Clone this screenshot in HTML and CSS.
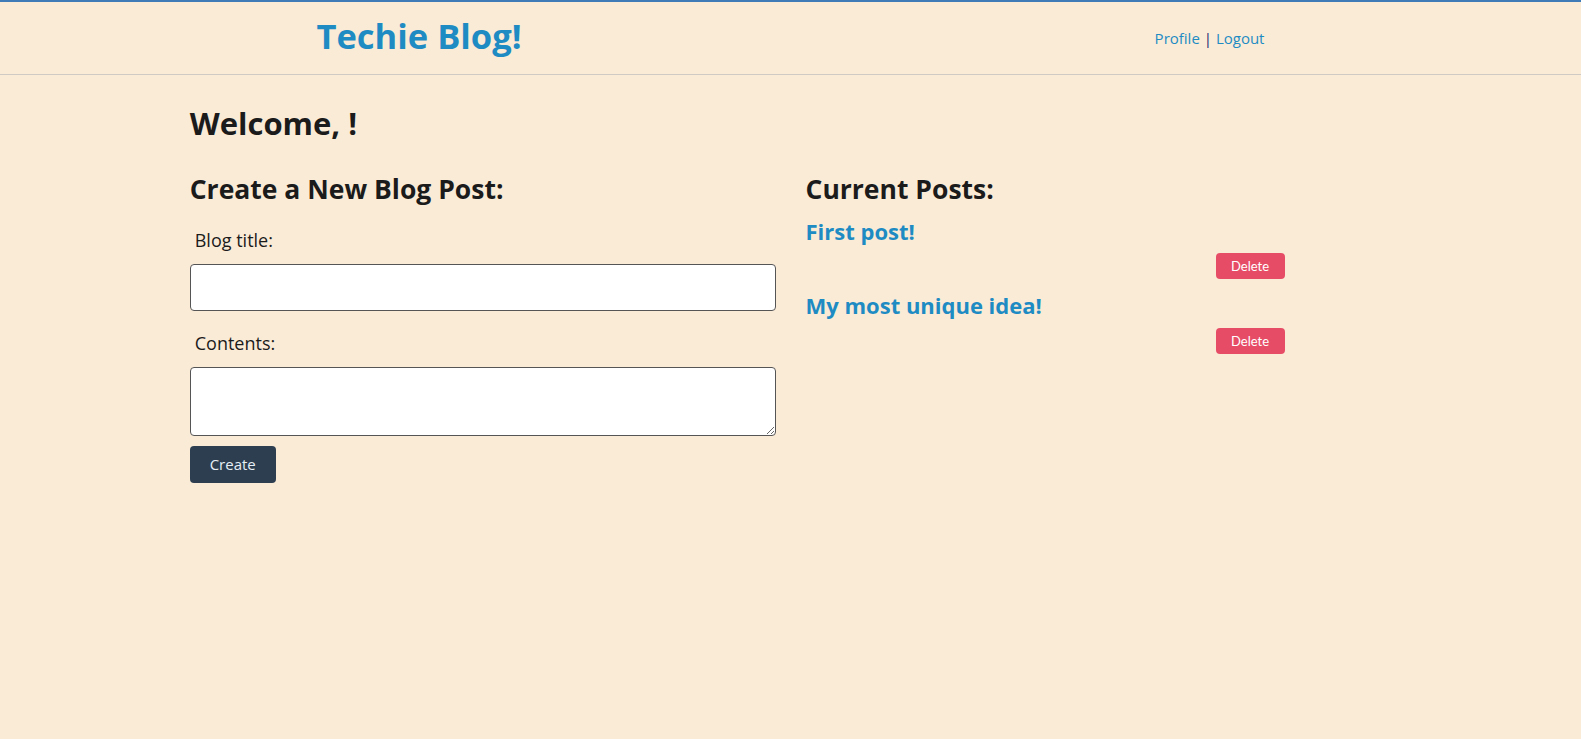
FILE: index.html
```html
<!DOCTYPE html>
<html lang="en">
<head>
    <meta charset="UTF-8">
    <meta name="viewport" content="width=device-width, initial-scale=1.0">
    <title>Techie Blog!</title>
    <link rel="stylesheet" href="styles.css">
</head>
<body>
    <header class="site-header">
        <a class="brand" href="#">Techie Blog!</a>
        <nav class="nav-links">
            <a href="#">Profile</a> | <a href="#">Logout</a>
        </nav>
    </header>

    <main class="content">
        <h1 class="welcome">Welcome, !</h1>

        <div class="columns">
            <section class="new-post">
                <h2>Create a New Blog Post:</h2>
                <form id="postForm">
                    <div class="form-group">
                        <label for="title">Blog title:</label>
                        <input type="text" id="title" name="title">
                    </div>
                    <div class="form-group">
                        <label for="contents">Contents:</label>
                        <textarea id="contents" name="contents"></textarea>
                    </div>
                    <button type="submit" class="create-btn">Create</button>
                </form>
            </section>

            <section class="current-posts">
                <h2>Current Posts:</h2>
                <div class="post-list">
                    <div class="post-item">
                        <h3><a href="#">First post!</a></h3>
                        <div class="post-actions">
                            <button class="delete-btn">Delete</button>
                        </div>
                    </div>
                    <div class="post-item">
                        <h3><a href="#">My most unique idea!</a></h3>
                        <div class="post-actions">
                            <button class="delete-btn">Delete</button>
                        </div>
                    </div>
                </div>
            </section>
        </div>
    </main>
</body>
</html>
```

FILE: styles.css
```css
body {
    margin: 0;
    font-family: "Open Sans", "Noto Sans", sans-serif;
    background-color: #faebd7;
    color: #1b1b1b;
}
a {
    color: #1e8bc3;
    text-decoration: none;
}
.site-header {
    display: flex;
    justify-content: space-around;
    align-items: center;
    height: 72px;
    border-top: 2px solid #3f7bb6;
    border-bottom: 1px solid #cfcac3;
}
.brand {
    font-size: 34.5px;
    font-weight: bold;
    line-height: 1.2;
    margin-top: -4px;
}
.nav-links {
    font-size: 15px;
    color: #1d2470;
}
.content {
    padding: 30px 12% 0;
}
.welcome {
    font-size: 31px;
    line-height: 1.2;
    margin: 0 0 32px 0;
}
.columns {
    display: grid;
    grid-template-columns: 1fr 1fr;
    gap: 30px;
}
h2 {
    font-size: 26.5px;
    line-height: 1.2;
    margin: 0 0 22px 0;
}
.current-posts h2 {
    margin-bottom: 12px;
}
.form-group {
    margin-bottom: 10px;
}
label {
    display: block;
    font-size: 18px;
    padding-left: 5px;
    margin-bottom: 12px;
}
input, textarea {
    display: block;
    width: 100%;
    box-sizing: border-box;
    border: 1px solid #555;
    border-radius: 4px;
    background: white;
    font-family: inherit;
    font-size: 16px;
}
input {
    height: 47px;
    margin-bottom: 20px;
}
textarea {
    height: 69px;
    resize: vertical;
}
.create-btn {
    background-color: #2c3e50;
    color: #e6eef5;
    border: none;
    border-radius: 4px;
    width: 86px;
    height: 37px;
    font-family: inherit;
    font-size: 15px;
    cursor: pointer;
}
.post-list {
    max-width: 479px;
}
.post-item h3 {
    font-size: 22px;
    line-height: 1.2;
    margin: 0;
}
.post-actions {
    display: flex;
    justify-content: flex-end;
    margin: 9px 0 13px;
}
.delete-btn {
    background-color: #e74c66;
    color: white;
    border: none;
    border-radius: 4px;
    width: 69px;
    height: 26px;
    font-family: "Lato", sans-serif;
    font-size: 13px;
    cursor: pointer;
}
```
